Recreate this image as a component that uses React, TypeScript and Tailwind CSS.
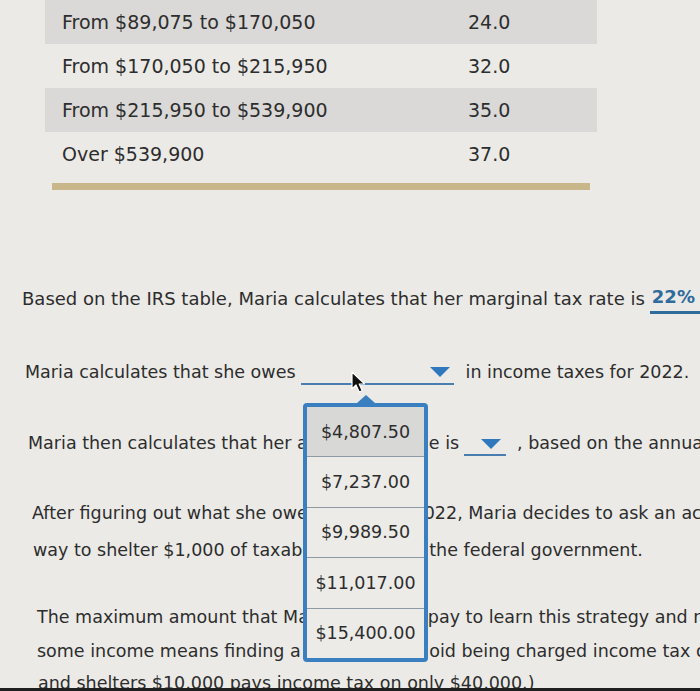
import React from "react";

const ROWS = [
    { range: "From $89,075 to $170,050", rate: "24.0", shaded: true },
    { range: "From $170,050 to $215,950", rate: "32.0", shaded: false },
    { range: "From $215,950 to $539,900", rate: "35.0", shaded: true },
    { range: "Over $539,900", rate: "37.0", shaded: false },
];

const OPTIONS = ["$4,807.50", "$7,237.00", "$9,989.50", "$11,017.00", "$15,400.00"];

function Caret() {
    return (
        <svg width="20" height="10" viewBox="0 0 20 10" className="shrink-0">
            <path d="M0 0h20L10 10z" fill="#2f78bd" />
        </svg>
    );
}

function Pointer() {
    return (
        <svg width="14" height="22" viewBox="0 0 14 22">
            <path
                d="M1 1v17l4-4 3.2 7 3-1.3-3-6.7h5.5z"
                fill="#111"
                stroke="#fff"
                strokeWidth="1.2"
                strokeLinejoin="round"
            />
        </svg>
    );
}

// text sitting under the open menu
function Covered({ w, children }: { w: string; children: React.ReactNode }) {
    return (
        <span className={`${w} inline-flex shrink-0 pr-[14px]`}>
            <span className="min-w-0 flex-1 overflow-hidden">{children}</span>
        </span>
    );
}

export default function App() {
    return (
        <div className="relative h-[691px] w-[700px] overflow-hidden bg-[#ebeae7] font-['DejaVu_Sans',Verdana,sans-serif] text-[17.5px] text-[#2d2d2d]">
            {/* Tax bracket table */}
            <div className="ml-[45px] w-[552px]">
                {ROWS.map((row) => (
                    <div
                        key={row.range}
                        className={`grid h-[44px] grid-cols-[423px_1fr] items-center text-[19px] ${row.shaded ? "bg-[#dad9d7]" : ""}`}
                    >
                        <span className="pl-[17px]">{row.range}</span>
                        <span>{row.rate}</span>
                    </div>
                ))}
            </div>
            <div className="ml-[52px] mt-[7px] h-[7px] w-[538px] bg-[#c9b78c]" />

            {/* Questions */}
            <div className="mt-[96px] flex h-[24px] items-center whitespace-nowrap pl-[22px] text-[18px]">
                Based on the IRS table, Maria calculates that her marginal tax rate is
                <span className="ml-[5px] shrink-0 border-b-[3px] border-[#2f6c9c] pb-[1px] pl-[2px] pr-[20px] font-bold text-[#2f6c9c]">
                    22%
                </span>
            </div>

            <div className="mt-[50px] flex h-[24px] items-center whitespace-nowrap pl-[25px]">
                Maria calculates that she owes
                <span className="relative ml-[5px] mr-[12px] inline-flex h-[26px] w-[153px] shrink-0 items-center justify-end border-b-2 border-[#4a7db0] pr-[4px] pt-[2px]">
                    <Caret />
                    <span className="absolute left-[50px] top-[12px]">
                        <Pointer />
                    </span>
                </span>
                in income taxes for 2022.
            </div>

            <div className="mt-[47px] flex h-[24px] items-center whitespace-nowrap pl-[28px]">
                Maria then calculates that her a
                <Covered w="w-[121px]">verage tax rat</Covered>e is
                <span className="ml-[5px] mr-[11px] inline-flex h-[26px] w-[42px] shrink-0 items-center justify-end border-b-2 border-[#4a7db0] pr-[5px] pt-[4px]">
                    <Caret />
                </span>
                , based on the annual income she earned in 2022.
            </div>

            <div className="mt-[46px] flex h-[24px] items-center whitespace-nowrap pl-[32px]">
                After figuring out what she owe
                <Covered w="w-[116px]">s in taxes for 2</Covered>
                022, Maria decides to ask an accountant if there is a
            </div>
            <div className="mt-[13px] flex h-[24px] items-center whitespace-nowrap pl-[33px]">
                way to shelter $1,000 of taxabl
                <Covered w="w-[122px]">e income from</Covered>
                the federal government.
            </div>

            <div className="mt-[43px] flex h-[24px] items-center whitespace-nowrap pl-[37px]">
                The maximum amount that Ma
                <Covered w="w-[119px]">ria should be willing to</Covered>
                pay to learn this strategy and reduce her taxes is
            </div>
            <div className="mt-[10px] flex h-[24px] items-center whitespace-nowrap pl-[37px]">
                some income means finding a l<Covered w="w-[118px]">egal way to av</Covered>
                oid being charged income tax on that income.
            </div>
            <div className="mt-[8px] flex h-[24px] items-center whitespace-nowrap pl-[38px]">
                and shelters $10,000 pays income tax on only $40,000.)
            </div>
            <div className="absolute bottom-0 left-0 h-[3px] w-full bg-[#1f1f1f]" />

            {/* Open dropdown menu */}
            <div className="absolute left-[303px] top-[395px] flex w-[125px] flex-col items-center">
                <svg width="18" height="8" viewBox="0 0 18 8">
                    <path d="M0 8L9 0l9 8z" fill="#3a7fc0" />
                </svg>
                <div className="flex h-[259px] w-full flex-col rounded-[4px] border-4 border-[#3a7fc0] bg-[#ecebe8]">
                    {OPTIONS.map((opt, i) => (
                        <div
                            key={opt}
                            className={`flex flex-1 items-center justify-center ${i === 0 ? "bg-[#d8d8d6]" : ""} ${i < OPTIONS.length - 1 ? "border-b border-[#8d9aa6]" : ""}`}
                        >
                            {opt}
                        </div>
                    ))}
                </div>
            </div>
        </div>
    );
}
